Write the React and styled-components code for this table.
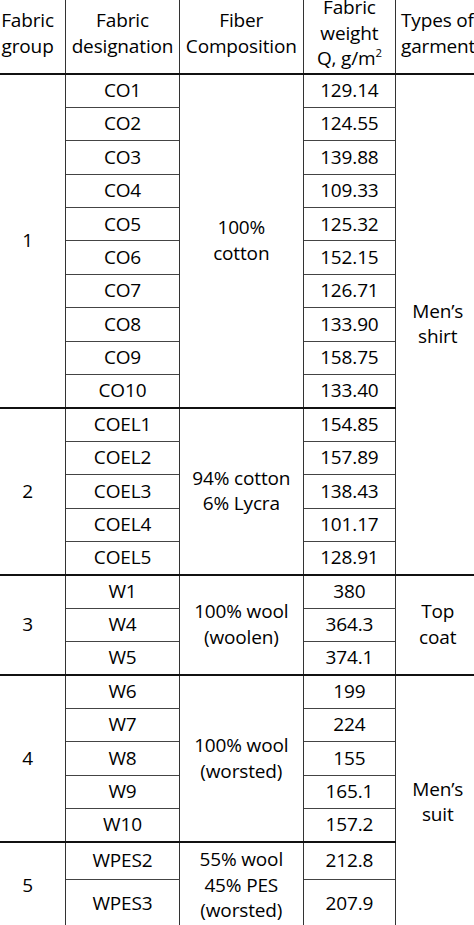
import React from "react";
import styled, { createGlobalStyle } from "styled-components";

const Global = createGlobalStyle`
  html, body { margin: 0; padding: 0; background: #fff; overflow: hidden; }
  body { width: 474px; height: 925px; }
`;

const Page = styled.div`
  width: 474px;
  height: 925px;
  overflow: hidden;
  background: #fff;
`;

const Table = styled.table`
  border-collapse: collapse;
  table-layout: fixed;
  width: 490px;
  margin-left: -10px;
  margin-top: -6px;
  font-family: "Open Sans", "Noto Sans", sans-serif;
  font-size: 19px;
  font-weight: 500;
  letter-spacing: -0.15px;
  line-height: 25.5px;
  color: #000;
`;

const Cell = styled.td`
  padding: 0;
  text-align: center;
  vertical-align: middle;
  border-left: 1.5px solid #333;
  border-right: 1.5px solid #333;
  border-top: ${(p) => (p.$groupTop ? "2.6px solid #111" : p.$thin ? "1.4px solid #444" : "none")};
  border-bottom: ${(p) => (p.$thin ? "1.4px solid #444" : "none")};
  white-space: nowrap;
  &:first-child { border-left: none; }
`;

const HeadCell = styled.th`
  padding: 0;
  font-weight: 500;
  text-align: center;
  vertical-align: middle;
  border-left: 1.5px solid #333;
  border-right: 1.5px solid #333;
  border-bottom: 2.6px solid #111;
  white-space: nowrap;
  &:first-child { border-left: none; }
`;

const LastHeadCell = styled(HeadCell)`
  text-align: left;
  padding-left: 5px;
`;

const HeadRow = styled.tr`
  height: 80px;
`;

const Row = styled.tr`
  height: ${(p) => p.$h || 33.4}px;
`;

const Sup = styled.sup`
  font-size: 0.6em;
  line-height: 0;
  position: relative;
  top: -0.05em;
`;

const groups = [
  {
    id: "1",
    comp: ["100%", "cotton"],
    rows: [
      ["CO1", "129.14"],
      ["CO2", "124.55"],
      ["CO3", "139.88"],
      ["CO4", "109.33"],
      ["CO5", "125.32"],
      ["CO6", "152.15"],
      ["CO7", "126.71"],
      ["CO8", "133.90"],
      ["CO9", "158.75"],
      ["CO10", "133.40"],
    ],
    garment: { text: ["Men’s", "shirt"], span: 15 },
  },
  {
    id: "2",
    comp: ["94% cotton", "6% Lycra"],
    rows: [
      ["COEL1", "154.85"],
      ["COEL2", "157.89"],
      ["COEL3", "138.43"],
      ["COEL4", "101.17"],
      ["COEL5", "128.91"],
    ],
  },
  {
    id: "3",
    comp: ["100% wool", "(woolen)"],
    rows: [
      ["W1", "380"],
      ["W4", "364.3"],
      ["W5", "374.1"],
    ],
    garment: { text: ["Top", "coat"], span: 3 },
  },
  {
    id: "4",
    comp: ["100% wool", "(worsted)"],
    rows: [
      ["W6", "199"],
      ["W7", "224"],
      ["W8", "155"],
      ["W9", "165.1"],
      ["W10", "157.2"],
    ],
    garment: { text: ["Men’s", "suit"], span: 7 },
  },
  {
    id: "5",
    comp: ["55% wool", "45% PES", "(worsted)"],
    rows: [
      ["WPES2", "212.8", 37.3],
      ["WPES3", "207.9", 49],
    ],
  },
];

const Lines = ({ items }) =>
  items.map((t, i) => (
    <React.Fragment key={i}>
      {i > 0 && <br />}
      {t}
    </React.Fragment>
  ));

export default function App() {
  return (
    <Page>
      <Global />
      <Table>
        <colgroup>
          <col style={{ width: "75.7px" }} />
          <col style={{ width: "113.6px" }} />
          <col style={{ width: "124px" }} />
          <col style={{ width: "92.2px" }} />
          <col style={{ width: "84.5px" }} />
        </colgroup>
        <thead>
          <HeadRow>
            <HeadCell>Fabric<br />group</HeadCell>
            <HeadCell>Fabric<br />designation</HeadCell>
            <HeadCell>Fiber<br />Composition</HeadCell>
            <HeadCell>
              Fabric<br />weight<br />Q, g/m<Sup>2</Sup>
            </HeadCell>
            <LastHeadCell>Types of<br />garment</LastHeadCell>
          </HeadRow>
        </thead>
        <tbody>
          {groups.map((g) =>
            g.rows.map(([des, w, h], i) => (
              <Row key={g.id + des} $h={h}>
                {i === 0 && (
                  <Cell rowSpan={g.rows.length} $groupTop>
                    {g.id}
                  </Cell>
                )}
                <Cell $thin $groupTop={i === 0}>{des}</Cell>
                {i === 0 && (
                  <Cell rowSpan={g.rows.length} $groupTop>
                    <Lines items={g.comp} />
                  </Cell>
                )}
                <Cell $thin $groupTop={i === 0}>{w}</Cell>
                {i === 0 && g.garment && (
                  <Cell rowSpan={g.garment.span} $groupTop>
                    <Lines items={g.garment.text} />
                  </Cell>
                )}
              </Row>
            ))
          )}
        </tbody>
      </Table>
    </Page>
  );
}
